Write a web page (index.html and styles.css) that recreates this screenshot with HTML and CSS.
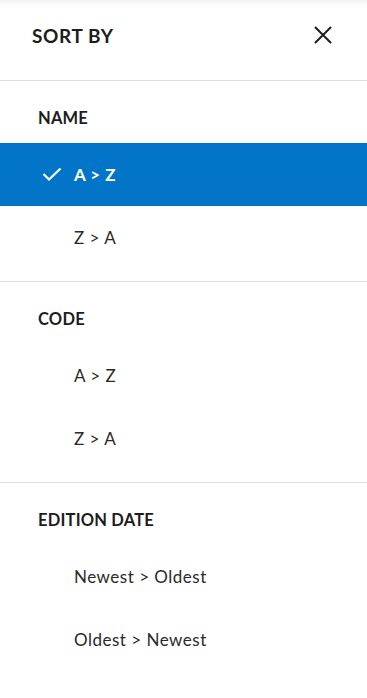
FILE: index.html
```html
<!DOCTYPE html>
<html>
<head>
<meta charset="utf-8">
<link rel="stylesheet" href="styles.css">
</head>
<body>
<div class="panel">
  <header class="head">
    <h1 class="title">SORT BY</h1>
    <button class="close" aria-label="Close">
      <svg width="20" height="20" viewBox="0 0 20 20"><path d="M2 2 L18 18 M18 2 L2 18" stroke="#1c1c1c" stroke-width="2" fill="none"/></svg>
    </button>
  </header>
  <section class="group">
    <h2 class="label">NAME</h2>
    <div class="opt selected">
      <svg class="check" width="20" height="14" viewBox="0 0 20 14"><path d="M1.5 7 L7 12.5 L18.5 1.5" stroke="#fff" stroke-width="2.2" fill="none"/></svg>
      <span>A &gt; Z</span>
    </div>
    <div class="opt"><span>Z &gt; A</span></div>
  </section>
  <section class="group">
    <h2 class="label">CODE</h2>
    <div class="opt"><span>A &gt; Z</span></div>
    <div class="opt"><span>Z &gt; A</span></div>
  </section>
  <section class="group last">
    <h2 class="label">EDITION DATE</h2>
    <div class="opt"><span>Newest &gt; Oldest</span></div>
    <div class="opt"><span>Oldest &gt; Newest</span></div>
  </section>
</div>
</body>
</html>
```
FILE: styles.css
```css
html, body {
  margin: 0;
  padding: 0;
  background: #fff;
}
body {
  font-family: Lato, "Open Sans", "Liberation Sans", sans-serif;
  color: #222;
}
.panel {
  width: 367px;
  height: 698px;
  background: linear-gradient(to bottom, #f2f2f2 0px, #fbfbfb 5px, #fff 10px);
}
.head {
  border-bottom: 1px solid #dedede;
  display: flex;
  align-items: center;
  justify-content: space-between;
  padding: 0 34px 10px 32px;
  box-sizing: content-box;
  height: 70px;
}
.title {
  margin: 0;
  font-size: 19px;
  font-weight: 700;
  letter-spacing: 0.6px;
  color: #1d1d1d;
}
.close {
  border: 0;
  background: none;
  padding: 0;
  width: 20px;
  height: 20px;
  display: flex;
}
.group {
  border-bottom: 1px solid #dedede;
  padding-bottom: 12px;
}
.group.last {
  border-bottom: 0;
}
.label {
  margin: 0;
  padding: 27px 0 0 38px;
  height: 20px;
  line-height: 20px;
  margin-bottom: 15px;
  font-size: 16.5px;
  font-weight: 700;
  letter-spacing: 0.2px;
  color: #1d1d1d;
}
.opt {
  height: 63px;
  display: flex;
  align-items: center;
  padding-left: 74px;
  font-size: 17px;
  font-weight: 400;
  letter-spacing: 0.5px;
  color: #2a2a2a;
  position: relative;
}
.opt.selected {
  background: #0275c8;
  color: #fff;
  font-weight: 700;
}
.check {
  position: absolute;
  left: 42px;
  top: 24px;
}
```
